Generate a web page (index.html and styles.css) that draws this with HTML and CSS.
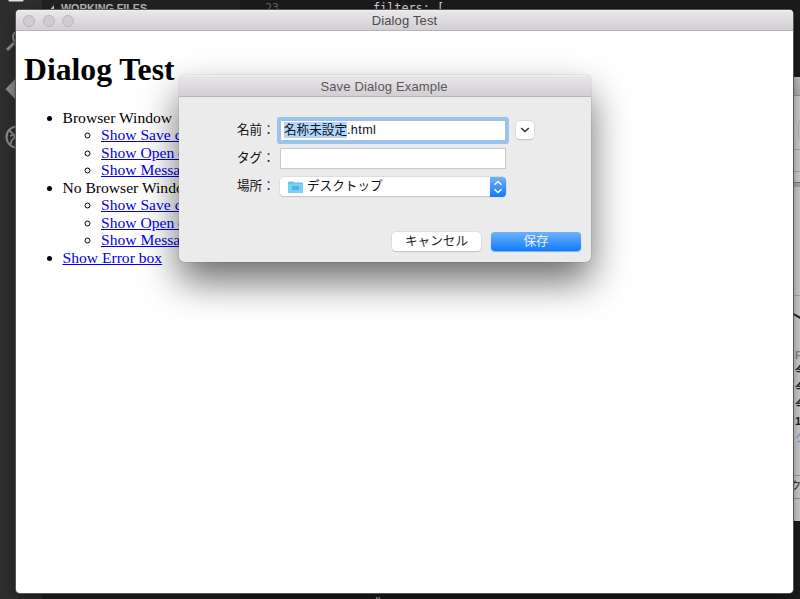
FILE: index.html
```html
<!DOCTYPE html>
<html lang="ja">
<head>
<meta charset="utf-8">
<title>Dialog Test</title>
<link rel="stylesheet" href="styles.css">
</head>
<body>
<main class="desktop">
  <section class="editor">
    <nav class="rail">
      <svg width="24" height="160" viewBox="0 0 24 160" fill="none">
        <path d="M9 0h14v1H9z" fill="#fff" stroke="#ddd"/>
        <circle cx="19" cy="37" r="6" stroke="#8c8c8c" stroke-width="2"/>
        <path d="M14 43l-7 7" stroke="#8c8c8c" stroke-width="3"/>
        <path d="M5.500 89L17 77v24z" fill="#8c8c8c"/>
        <circle cx="17" cy="137" r="10.500" stroke="#8c8c8c" stroke-width="2"/>
        <path d="M9 130l9 9M10 136q4-2 5 2M11 144q0-5 4-6" stroke="#8c8c8c" stroke-width="1.800"/>
      </svg>
    </nav>
    <div class="files"><span class="triangle"></span>WORKING FILES</div>
    <div class="code"><span class="line-number">23</span><span class="source">filters: [</span></div>
  </section>

  <aside class="finder">
    <div class="finder-bar"></div>
    <div class="finder-tools"><span class="finder-button"></span></div>
    <div class="finder-path"></div>
    <div class="finder-tabs"></div>
    <div class="finder-list"></div>
    <div class="finder-info"><span class="caret"></span><b>F</b><span>今</span><span>今</span><span>今</span><span>1</span><i>ク</i></div>
    <div class="finder-foot">ク</div>
    <div class="finder-end"></div>
  </aside>
  <span class="code-mark">"</span>

  <section class="window">
    <header class="titlebar">
      <span class="lights"><i></i><i></i><i></i></span>
      Dialog Test
    </header>
    <article class="page">
      <h1>Dialog Test</h1>
      <ul>
        <li>Browser Window
          <ul>
            <li><a href="#">Show Save dialog</a></li>
            <li><a href="#">Show Open dialog</a></li>
            <li><a href="#">Show Message box</a></li>
          </ul>
        </li>
        <li>No Browser Window
          <ul>
            <li><a href="#">Show Save dialog</a></li>
            <li><a href="#">Show Open dialog</a></li>
            <li><a href="#">Show Message box</a></li>
          </ul>
        </li>
        <li><a href="#">Show Error box</a></li>
      </ul>
    </article>
  </section>

  <section class="dialog">
    <header class="titlebar dialog-title">Save Dialog Example</header>
    <div class="form">
      <div class="row name-row">
        <label>名前：</label>
        <div class="field focused"><mark>名称未設定</mark><span class="extension">.html</span></div>
        <button class="expand"><svg width="10" height="6" viewBox="0 0 10 6"><path d="M1.200 1L5 4.500 8.800 1" fill="none" stroke="#333" stroke-width="1.500"/></svg></button>
      </div>
      <div class="row tag-row">
        <label>タグ：</label>
        <div class="field"></div>
      </div>
      <div class="row place-row">
        <label>場所：</label>
        <div class="select">
          <svg class="folder" width="15" height="12" viewBox="0 0 15 12"><path d="M0 1.500Q0 .5 1 .5h4l1.200 1H14q1 0 1 1V11q0 1-1 1H1q-1 0-1-1z" fill="#62c4ef"/><path d="M0 3h15v8q0 1-1 1H1q-1 0-1-1z" fill="#78d1f7"/><path d="M4 5h7v4H4z" fill="#4fb4e2"/></svg>
          <span>デスクトップ</span>
          <span class="stepper"><svg width="16" height="20" viewBox="0 0 16 20"><path d="M4.500 7.800L8 4.500l3.500 3.300M4.500 12.200l3.500 3.300 3.500-3.300" fill="none" stroke="#fff" stroke-width="1.500"/></svg></span>
        </div>
      </div>
      <div class="actions">
        <button class="cancel">キャンセル</button>
        <button class="save">保存</button>
      </div>
    </div>
  </section>
</main>
</body>
</html>
```
FILE: styles.css
```css
* { box-sizing: border-box; }
body { margin: 0; }
.desktop {
  position: relative;
  width: 800px;
  height: 599px;
  overflow: hidden;
  background: #1b1b1b;
}
.editor {
  display: grid;
  grid-template-columns: 42px 198px 1fr;
  height: 599px;
}
.rail { background: #2e2e2e; }
.files {
  display: flex;
  gap: 7px;
  padding: 2px 0 0 7px;
  background: #222;
  color: #b8b8b8;
  font: bold 10.700px/12px "Liberation Sans", sans-serif;
}
.triangle {
  width: 5px;
  height: 6px;
  margin-top: 3px;
  background: #ccc;
  clip-path: polygon(100% 0, 100% 100%, 0 100%);
}
.code {
  display: flex;
  align-items: flex-start;
  padding: 1px 0 0 25px;
  color: #cfcfcf;
  font: 11.800px/14px "DejaVu Sans Mono", monospace;
}
.line-number { width: 108px; color: #606060; }
.code-mark {
  position: absolute;
  left: 374px;
  top: 595px;
  color: #bbb;
  font: 13px/14px "DejaVu Sans Mono", monospace;
}

.finder {
  position: absolute;
  left: 785px;
  top: 77px;
  width: 40px;
  height: 444px;
  padding-left: 8px;
  background: #d0d0d0;
  color: #222;
  font: 11px/17px "Liberation Sans", "Noto Sans CJK JP", sans-serif;
}
.finder-bar { height: 19px; background: linear-gradient(#c4c4c4, #b0b0b0); border-bottom: 1px solid #999; }
.finder-tools { height: 54px; padding: 24px 0 0 5px; border-bottom: 1px solid #aaa; }
.finder-button { display: block; width: 20px; height: 20px; border: 1px solid #b4b4b4; border-radius: 3px; }
.finder-path { height: 22px; border-bottom: 1px solid #aaa; }
.finder-tabs { height: 15px; border-bottom: 4px solid #aaa; box-shadow: inset 0 -1px #777; }
.finder-list { height: 109px; border-bottom: 1px solid #aaa; }
.finder-info { display: flex; flex-direction: column; height: 180px; padding: 17px 0 0 2px; border-bottom: 1px solid #999; }
.finder-info span { height: 16.800px; font-weight: bold; }
.finder-info b { height: 16px; color: #8a8a8a; }
.finder-info i { color: #5994d8; font-style: normal; }
.finder-info .caret { width: 10px; height: 2px; margin: 2px 0 30px -3px; background: #222; transform: rotate(30deg); }
.finder-foot { height: 23px; padding-top: 2px; margin-left: -3px; border-bottom: 1px solid #999; }

.window {
  position: absolute;
  left: 16px;
  top: 10px;
  width: 777px;
  height: 583px;
  overflow: hidden;
  border-radius: 4px;
  background: #fff;
  box-shadow: 0 0 0 1px #555, 0 5px 14px rgba(0, 0, 0, .45);
}
.titlebar {
  position: relative;
  height: 21px;
  border-bottom: 1px solid #b5b3b5;
  background: linear-gradient(#eae8ea, #d1cfd1);
  box-shadow: inset 0 1px #f2f0f2;
  color: #4d4a4d;
  font: 13px/22px "Liberation Sans", sans-serif;
  letter-spacing: .15px;
  text-align: center;
}
.lights {
  position: absolute;
  left: 7px;
  top: 5px;
  display: flex;
  gap: 7.500px;
}
.lights i {
  width: 12px;
  height: 12px;
  border: 1px solid #b9b7b9;
  border-radius: 50%;
  background: #cfcdcf;
}
.page {
  padding: 21px 8px 0;
  color: #000;
  font: 15.600px/17.500px "Liberation Serif", serif;
}
.page h1 { margin: 0 0 20.750px; font-size: 31.700px; line-height: 36px; }
.page ul { margin: 0; padding-left: 38.500px; }
.page a { color: #00e; }

.dialog {
  position: absolute;
  left: 179px;
  top: 75px;
  width: 412px;
  height: 187px;
  border-radius: 5px;
  background: #ebebeb;
  box-shadow: 0 0 1px rgba(0, 0, 0, .6), 0 19px 38px rgba(0, 0, 0, .58);
}
.dialog-title { height: 22px; border-radius: 5px 5px 0 0; color: #5a575a; line-height: 23px; padding-right: 2px; }
.form {
  padding: 20px 10px 0 58px;
  color: #111;
  font: 12.600px/19px "Liberation Sans", "Noto Sans CJK JP", sans-serif;
}
.row { display: flex; align-items: center; }
.name-row { height: 26px; }
.tag-row { height: 31px; }
.place-row { height: 25px; }
.row label { width: 43px; white-space: nowrap; }
.field {
  width: 226px;
  height: 21px;
  padding-left: 3px;
  border: 1px solid #c9c9c9;
  background: #fff;
  white-space: nowrap;
}
.focused { border-color: #a9bfd6; box-shadow: 0 0 0 3px #98c4f3; border-radius: 1px; }
mark { display: inline-block; height: 16px; line-height: 16px; background: #b2d7fe; color: inherit; }
.extension { letter-spacing: .4px; }
button {
  display: flex;
  align-items: center;
  justify-content: center;
  padding: 0;
  border: 0;
  border-radius: 4px;
  background: #fff;
  box-shadow: 0 0 0 .5px #d2d2d2, 0 1px 1px #b5b5b5;
  color: #222;
  font: inherit;
}
.expand { width: 18px; height: 18px; margin-left: 10px; }
.select {
  display: flex;
  align-items: center;
  width: 226px;
  height: 19px;
  padding-left: 8px;
  border-radius: 4px;
  background: #fff;
  box-shadow: 0 0 0 .5px #d2d2d2, 0 1px 1px #b5b5b5;
}
.folder { margin-right: 4px; }
.stepper {
  width: 16px;
  height: 20px;
  margin-left: auto;
  border-radius: 0 4px 4px 0;
  background: linear-gradient(#6bb3fa, #1079ff);
}
.stepper svg { display: block; }
.actions { display: flex; justify-content: flex-end; gap: 10px; margin-top: 33px; }
.actions button { height: 19px; width: 89px; }
.actions .save { width: 90px; background: linear-gradient(#6cb3fa, #117aff); color: #e2f0ff; box-shadow: 0 1px 1px #7daade; }
```
